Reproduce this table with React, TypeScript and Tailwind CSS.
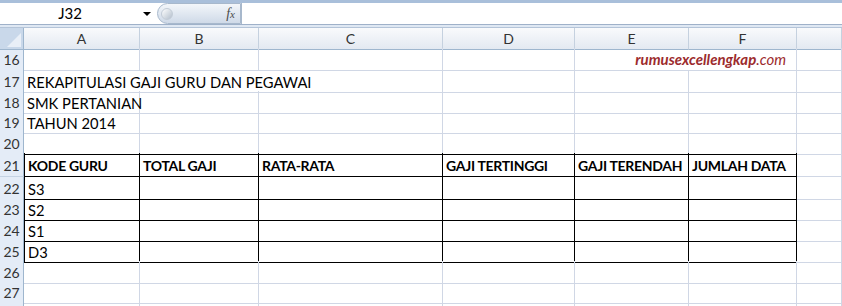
import React from "react";

const cols = ["A", "B", "C", "D", "E", "F", ""];
const gridCols = "grid grid-cols-[24px_116px_119px_184px_132px_114px_108px_1fr]";

const rowHeights: Record<number, string> = {
  16: "h-[22px]",
  17: "h-[21px]",
  18: "h-[20px]",
  19: "h-[21px]",
  20: "h-[21px]",
  21: "h-[24px]",
  22: "h-[21px]",
  23: "h-[21px]",
  24: "h-[21px]",
  25: "h-[21px]",
  26: "h-[20px]",
  27: "h-[20px]",
  28: "h-[20px]",
};

const headers = ["KODE GURU", "TOTAL GAJI", "RATA-RATA", "GAJI TERTINGGI", "GAJI TERENDAH", "JUMLAH DATA"];
const kode: Record<number, string> = { 22: "S3", 23: "S2", 24: "S1", 25: "D3" };

function RowHead({ n }: { n?: number }) {
  return (
    <div className="flex items-center justify-center border-r border-b border-r-[#9eb6ce] border-b-[#c5d3e3] bg-[#e4ecf7] text-[14px] text-[#333] pt-[1px]">
      {n}
    </div>
  );
}

function Cell({ children, className = "" }: { children?: React.ReactNode; className?: string }) {
  return (
    <div className={`flex items-end whitespace-nowrap pl-[3px] pb-[1px] leading-[18px] border-r border-b border-[#d0d7e5] ${className}`}>
      {children}
    </div>
  );
}

function TopBar() {
  return (
    <div>
      <div className="h-[3px] bg-[#a9bfda]" />
      <div className="flex h-[22px] bg-white border-b border-[#9fb1c9]">
        <div className="w-[140px] flex items-center justify-center text-[15px] text-black">J32</div>
        <div className="w-[17px] flex items-center justify-start pl-[3px]">
          <div className="w-0 h-0 border-l-[4px] border-r-[4px] border-t-[4px] border-l-transparent border-r-transparent border-t-black" />
        </div>
        {/* grip + fx button */}
        <div className="w-[84px] h-[21px] flex items-center rounded-l-[11px] border border-[#a7b8cc] bg-gradient-to-b from-[#f3f6fa] to-[#cfdae8]">
          <div className="ml-[3px] w-[12px] h-[12px] rounded-full bg-gradient-to-br from-[#ffffff] to-[#b3bfcc] border border-[#c3ccd7]" />
          <div className="flex-1" />
          <span className="mr-[5px] italic text-[#4b4b4b] text-[14px] leading-none" style={{ fontFamily: '"Liberation Serif", serif' }}>
            f<span className="text-[11px]">x</span>
          </span>
        </div>
        <div className="flex-1 border-l border-[#a7b8cc] bg-white" />
      </div>
      <div className="h-[3px] bg-[#dfe8f3] border-b border-[#b4c4d8]" />
    </div>
  );
}

export default function App() {
  const rows = [16, 17, 18, 19, 20, 21, 22, 23, 24, 25, 26, 27, 28];
  return (
    <div className="w-[842px] h-[306px] overflow-hidden bg-white text-[14.7px] text-black" style={{ fontFamily: "Lato, 'Liberation Sans', sans-serif" }}>
      <TopBar />

      {/* column headers */}
      <div className={`${gridCols} h-[20px]`}>
        <div className="relative bg-[#c9d8ea] border-r border-b border-[#9eb6ce]">
          <svg className="absolute right-[2px] bottom-[2px]" width="14" height="14" viewBox="0 0 14 14">
            <polygon points="14,0 14,14 0,14" fill="#e9eff7" />
          </svg>
        </div>
        {cols.map((c, i) => (
          <div
            key={i}
            className="flex items-center justify-center bg-gradient-to-b from-[#f9fafc] to-[#e3e9f1] border-r border-b border-r-[#c5d1df] border-b-[#9eb6ce] text-[14px] text-[#333]"
          >
            {c}
          </div>
        ))}
      </div>

      {rows.map((n) => {
        const h = rowHeights[n];
        if (n === 16) {
          return (
            <div key={n} className={`${gridCols} ${h}`}>
              <RowHead n={n} />
              <Cell />
              <Cell />
              <Cell />
              <Cell />
              <Cell className="col-span-2 justify-end pr-[10px] pb-[2px] text-[15px] text-[#9c2b2d] italic">
                <span className="font-bold">rumusexcellengkap</span>.com
              </Cell>
              <Cell />
            </div>
          );
        }
        if (n >= 17 && n <= 19) {
          const text = n === 17 ? "REKAPITULASI GAJI GURU DAN PEGAWAI" : n === 18 ? "SMK PERTANIAN" : "TAHUN 2014";
          return (
            <div key={n} className={`${gridCols} ${h}`}>
              <RowHead n={n} />
              {n === 17 ? (
                <Cell className="col-span-3">{text}</Cell>
              ) : (
                <>
                  <Cell>{text}</Cell>
                  <Cell />
                  <Cell />
                </>
              )}
              <Cell />
              <Cell />
              <Cell />
              <Cell />
            </div>
          );
        }
        if (n === 20) {
          return (
            <div key={n} className={`${gridCols} ${h}`}>
              <RowHead n={n} />
              {cols.map((_, i) => (
                <Cell key={i} className={i < 6 ? "border-b-black" : ""} />
              ))}
            </div>
          );
        }
        if (n >= 21 && n <= 25) {
          return (
            <div key={n} className={`${gridCols} ${h}`}>
              <RowHead n={n} />
              {headers.map((t, i) => (
                <Cell
                  key={i}
                  className={`border-r-black border-b-black ${i === 0 ? "border-l border-l-black" : ""} ${n === 21 ? "font-bold text-[14px] tracking-[-0.3px]" : ""}`}
                >
                  {n === 21 ? t : i === 0 ? kode[n] : ""}
                </Cell>
              ))}
              <Cell />
            </div>
          );
        }
        return (
          <div key={n} className={`${gridCols} ${h}`}>
            <RowHead n={n === 28 ? undefined : n} />
            {cols.map((_, i) => (
              <Cell key={i} />
            ))}
          </div>
        );
      })}
    </div>
  );
}
